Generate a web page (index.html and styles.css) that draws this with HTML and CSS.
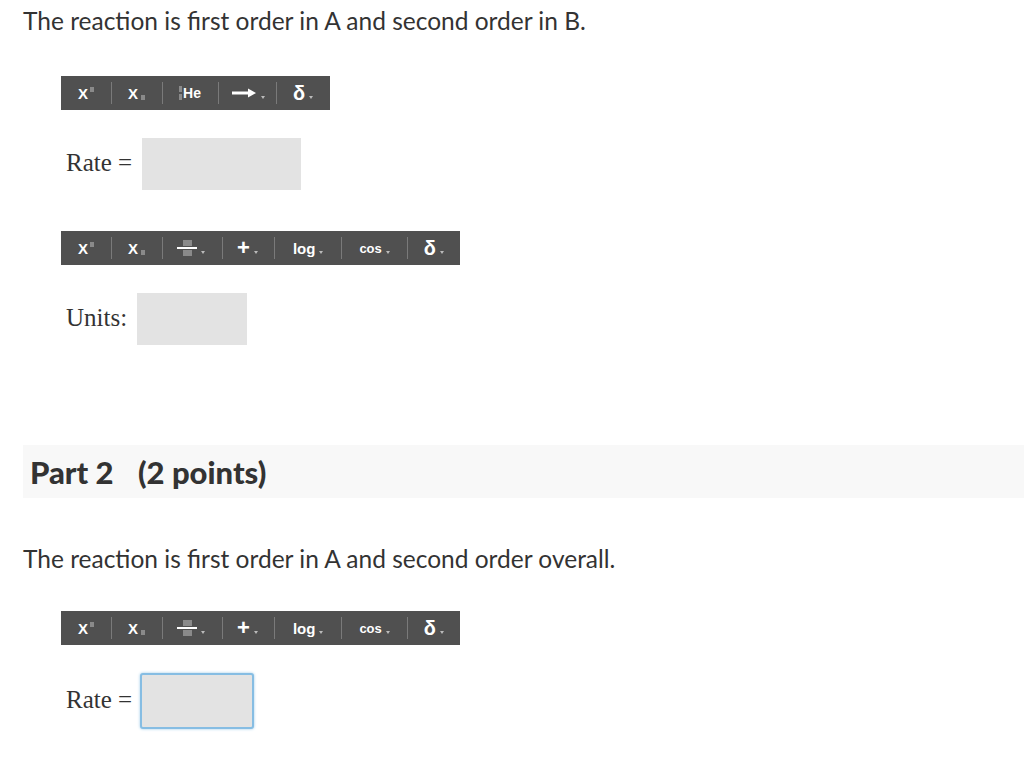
FILE: index.html
```html
<!DOCTYPE html>
<html lang="en">
<head>
    <meta charset="UTF-8">
    <title>Rate Law Question</title>
    <link rel="stylesheet" href="styles.css">
</head>
<body>
    <div class="part">
        <p class="prompt">The reaction is first order in A and second order in B.</p>

        <!-- chemistry toolbar -->
        <div class="toolbar">
            <span class="tb-btn"><b>X</b><i class="box sup"></i></span>
            <span class="tb-btn"><b>X</b><i class="box sub"></i></span>
            <span class="tb-btn"><span class="iso"><i></i><i></i></span><b class="small">He</b></span>
            <span class="tb-btn arrow">
                <svg width="25" height="10" viewBox="0 0 25 10"><path d="M0 5h18" stroke="#fff" stroke-width="3"/><path d="M16 0.5l8 4.5-8 4.5z" fill="#fff"/></svg><i class="caret"></i>
            </span>
            <span class="tb-btn"><b class="delta">δ</b><i class="caret"></i></span>
        </div>

        <div class="answer-row">
            <label class="answer-label">Rate =</label>
            <div class="answer-box rate-box"></div>
        </div>

        <!-- math toolbar -->
        <div class="toolbar">
            <span class="tb-btn"><b>X</b><i class="box sup"></i></span>
            <span class="tb-btn"><b>X</b><i class="box sub"></i></span>
            <span class="tb-btn frac"><span class="frac-icon"><i></i><i class="bar"></i><i></i></span><i class="caret"></i></span>
            <span class="tb-btn plus-btn"><b class="plus">+</b><i class="caret"></i></span>
            <span class="tb-btn log-btn"><b class="word">log</b><i class="caret"></i></span>
            <span class="tb-btn cos-btn"><b class="word small">cos</b><i class="caret"></i></span>
            <span class="tb-btn delta-btn"><b class="delta">δ</b><i class="caret"></i></span>
        </div>

        <div class="answer-row units-row">
            <label class="answer-label">Units:</label>
            <div class="answer-box units-box"></div>
        </div>
    </div>

    <h2 class="part-title">Part 2 <span class="points">(2 points)</span></h2>

    <div class="part">
        <p class="prompt second">The reaction is first order in A and second order overall.</p>

        <div class="toolbar">
            <span class="tb-btn"><b>X</b><i class="box sup"></i></span>
            <span class="tb-btn"><b>X</b><i class="box sub"></i></span>
            <span class="tb-btn frac"><span class="frac-icon"><i></i><i class="bar"></i><i></i></span><i class="caret"></i></span>
            <span class="tb-btn plus-btn"><b class="plus">+</b><i class="caret"></i></span>
            <span class="tb-btn log-btn"><b class="word">log</b><i class="caret"></i></span>
            <span class="tb-btn cos-btn"><b class="word small">cos</b><i class="caret"></i></span>
            <span class="tb-btn delta-btn"><b class="delta">δ</b><i class="caret"></i></span>
        </div>

        <div class="answer-row">
            <label class="answer-label">Rate =</label>
            <div class="answer-box focus-box"></div>
        </div>
    </div>
</body>
</html>
```

FILE: styles.css
```css
/* page basics */
body {
    margin: 0;
    font-family: Lato, "Open Sans", sans-serif;
    color: #333;
    background: #fff;
}

.part {
    padding-left: 23px;
}

.prompt {
    font-size: 24.5px;
    margin: 0;
    padding-top: 6px;
    height: 70px;
}

.prompt.second {
    padding-top: 46px;
    height: 67px;
}

/* toolbar */
.toolbar {
    display: inline-flex;
    align-items: center;
    height: 34px;
    margin-left: 38px;
    background: #505050;
    font-family: "Liberation Sans", Arial, sans-serif;
    color: #fff;
}

.tb-btn {
    position: relative;
    display: flex;
    align-items: center;
    justify-content: center;
    height: 100%;
    padding: 0 17px;
}

.tb-btn + .tb-btn::before {
    content: "";
    position: absolute;
    left: 0;
    top: 6px;
    bottom: 6px;
    border-left: 1px solid #7a7a7a;
}

.tb-btn.arrow {
    padding: 0 11px 0 14px;
}

.tb-btn.frac {
    padding: 0 17px 0 15px;
}

.tb-btn.plus-btn {
    padding: 0 16px 0 15px;
}

.tb-btn.log-btn {
    padding: 0 18px 0 19px;
}

.tb-btn.cos-btn {
    padding: 0 17px 0 18px;
}

.tb-btn.delta-btn {
    padding: 0 16px 0 17px;
}

.tb-btn b {
    font-size: 15px;
    font-weight: bold;
}

.tb-btn b.small {
    font-size: 14px;
}

.tb-btn b.delta {
    font-size: 20px;
}

.tb-btn b.plus {
    font-size: 22px;
    line-height: 1;
}

.tb-btn b.word {
    font-size: 15px;
}

.tb-btn b.word.small {
    font-size: 13px;
}

.box {
    display: inline-block;
    width: 4px;
    background: #8a8a8a;
}

.box.sup {
    height: 5px;
    margin: 0 0 8px 2px;
}

.box.sub {
    height: 5px;
    margin: 9px 0 0 3px;
}

/* isotope placeholder in front of He */
.iso {
    display: flex;
    flex-direction: column;
    gap: 2px;
    margin-right: 1px;
}

.iso i {
    width: 3px;
    height: 6px;
    background: #8a8a8a;
}

.caret {
    width: 0;
    height: 0;
    margin: 9px 0 0 4px;
    border-left: 2px solid transparent;
    border-right: 2px solid transparent;
    border-top: 3px solid #bbb;
}

.frac-icon {
    display: flex;
    flex-direction: column;
    align-items: center;
    gap: 1px;
}

.frac-icon i {
    width: 9px;
    height: 6px;
    background: #8a8a8a;
}

.frac-icon i.bar {
    width: 20px;
    height: 2px;
    background: #fff;
}

/* answer rows */
.answer-row {
    display: flex;
    align-items: center;
    margin-left: 43px;
    padding: 28px 0 41px;
}

.answer-label {
    font-family: "Liberation Serif", "Times New Roman", serif;
    font-size: 25px;
    line-height: 1;
    padding-bottom: 4px;
    color: #333;
    margin-right: 10px;
}

.answer-box {
    background: #e3e3e3;
    height: 52px;
}

.rate-box {
    width: 159px;
}

.units-row {
    padding-bottom: 0;
}

.units-box {
    width: 110px;
}

.focus-box {
    width: 110px;
    height: 52px;
    margin-left: -2px;
    border: 2px solid #86bde3;
    border-radius: 3px;
    box-shadow: 0 0 3px #9cc9e8;
}

/* part heading */
.part-title {
    margin: 100px 0 0 23px;
    height: 53px;
    padding-left: 7px;
    background: #f8f8f8;
    font-size: 31px;
    font-weight: 900;
    line-height: 55px;
    color: #333;
}

.points {
    margin-left: 17px;
}
```
